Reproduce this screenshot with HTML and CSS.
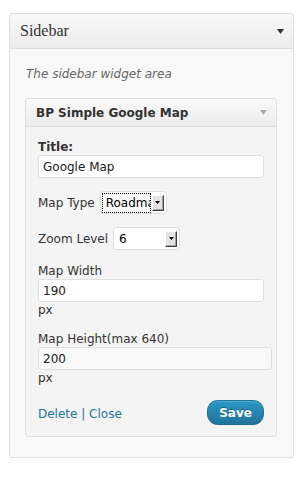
FILE: index.html
```html
<!DOCTYPE html>
<html lang="en">
<head>
<meta charset="utf-8">
<title>Sidebar widgets</title>
<link rel="stylesheet" href="styles.css">
</head>
<body>
<div class="panel">
  <div class="panel-head">
    <h3 class="panel-title">Sidebar</h3>
    <svg class="toggle" width="7" height="5" viewBox="0 0 7 5"><polygon points="0,0 7,0 3.5,5" fill="#333"/></svg>
  </div>
  <div class="panel-body">
    <p class="desc">The sidebar widget area</p>
    <div class="widget">
      <div class="widget-head">
        <h4 class="widget-title">BP Simple Google Map</h4>
        <svg class="toggle" width="7" height="5" viewBox="0 0 7 5"><polygon points="0,0 7,0 3.5,5" fill="#aaa"/></svg>
      </div>
      <div class="widget-body">
        <label class="label bold">Title:</label>
        <input class="field" type="text" value="Google Map">

        <div class="row">
          <span class="row-label">Map Type</span>
          <div class="select">
            <span class="val focus">Roadmap</span>
            <span class="arrow"><svg width="5" height="3" viewBox="0 0 5 3"><polygon points="0,0 5,0 2.5,3" fill="#000"/></svg></span>
          </div>
        </div>

        <div class="row">
          <span class="row-label">Zoom Level</span>
          <div class="select">
            <span class="val">6</span>
            <span class="arrow"><svg width="5" height="3" viewBox="0 0 5 3"><polygon points="0,0 5,0 2.5,3" fill="#000"/></svg></span>
          </div>
        </div>

        <label class="label gap">Map Width</label>
        <input class="field" type="text" value="190">
        <span class="unit">px</span>

        <label class="label gap">Map Height(max 640)</label>
        <input class="field wide" type="text" value="200">
        <span class="unit">px</span>

        <div class="footer">
          <span class="links"><a href="#">Delete</a> | <a href="#">Close</a></span>
          <button class="btn-save" type="button">Save</button>
        </div>
      </div>
    </div>
  </div>
</div>
</body>
</html>
```
FILE: styles.css
```css
body {
  margin: 0;
  background: #fff;
  font-family: "DejaVu Sans", sans-serif;
  font-size: 12px;
  color: #333;
}

.panel {
  width: 285px;
  box-sizing: border-box;
  margin: 13px 0 0 9px;
  border: 1px solid #dfdfdf;
  border-radius: 3px;
  background: #f9f9f9;
}

.panel-head {
  height: 34px;
  display: flex;
  align-items: center;
  justify-content: space-between;
  padding: 0 9px 0 10px;
  background: linear-gradient(#f9f9f9, #ececec);
  border-bottom: 1px solid #dfdfdf;
  border-radius: 3px 3px 0 0;
}

.panel-title {
  margin: 0;
  font: normal 16px/1 "Liberation Serif", serif;
  color: #333;
}

.toggle {
  display: block;
}

.panel-body {
  padding: 17px 16px 20px 15px;
}

.desc {
  margin: 0 0 16px 1px;
  font-style: italic;
  color: #666;
  line-height: 16px;
}

.widget {
  border: 1px solid #dfdfdf;
  border-radius: 3px;
  background: #f4f4f4;
}

.widget-head {
  height: 27px;
  display: flex;
  align-items: center;
  justify-content: space-between;
  padding: 0 9px 0 10px;
  background: linear-gradient(#f9f9f9, #ececec);
  border-bottom: 1px solid #dfdfdf;
  border-radius: 3px 3px 0 0;
}

.widget-title {
  margin: 0;
  font-size: 12px;
  font-weight: bold;
  color: #333;
}

.widget-body {
  padding: 12px 12px 11px 12px;
}

.label {
  display: block;
  line-height: 16px;
}

.label.bold {
  font-weight: bold;
}

.label.gap {
  margin-top: 13px;
}

.field {
  display: block;
  width: 226px;
  height: 23px;
  box-sizing: border-box;
  margin: 0;
  padding: 0 4px;
  border: 1px solid #dfdfdf;
  border-radius: 3px;
  background: #fff;
  font: 12px "DejaVu Sans", sans-serif;
  color: #222;
  outline: none;
}

.field.wide {
  width: 234px;
  background: #f9f9f9;
}

.unit {
  display: block;
  line-height: 16px;
}

.row {
  display: flex;
  align-items: center;
  margin-top: 13px;
}

.row-label {
  margin-right: 5px;
}

.select {
  width: 67px;
  height: 23px;
  box-sizing: border-box;
  display: flex;
  align-items: center;
  gap: 1px;
  padding: 1px 2px 1px 1px;
  border: 1px solid #dfdfdf;
  border-radius: 3px;
  background: #fff;
}

.val {
  flex: 1;
  min-width: 0;
  height: 20px;
  box-sizing: border-box;
  padding-left: 3px;
  line-height: 18px;
  border: 1px dotted transparent;
  overflow: hidden;
  white-space: nowrap;
  color: #000;
}

.val.focus {
  border-color: #000;
}

.arrow {
  width: 12px;
  height: 16px;
  box-sizing: border-box;
  display: flex;
  align-items: center;
  justify-content: center;
  background: #e4e4e4;
  border: 1px solid;
  border-color: #fff #404040 #404040 #fff;
  box-shadow: inset -1px -1px 0 #a0a0a0;
}

.arrow svg {
  display: block;
}

.footer {
  display: flex;
  justify-content: space-between;
  align-items: center;
  margin-top: 14px;
}

.links {
  color: #21759b;
  padding-top: 3px;
}

.links a {
  color: #21759b;
  text-decoration: none;
}

.btn-save {
  width: 57px;
  height: 25px;
  box-sizing: border-box;
  padding: 0;
  border: 1px solid #21759b;
  border-bottom-color: #1e6a8d;
  border-radius: 11px;
  background: linear-gradient(#2a95c5, #21759b);
  box-shadow: inset 0 1px 0 rgba(120, 200, 230, 0.5);
  color: #fff;
  font: bold 12px "DejaVu Sans", sans-serif;
  text-shadow: 0 -1px 0 rgba(0, 0, 0, 0.3);
}
```
